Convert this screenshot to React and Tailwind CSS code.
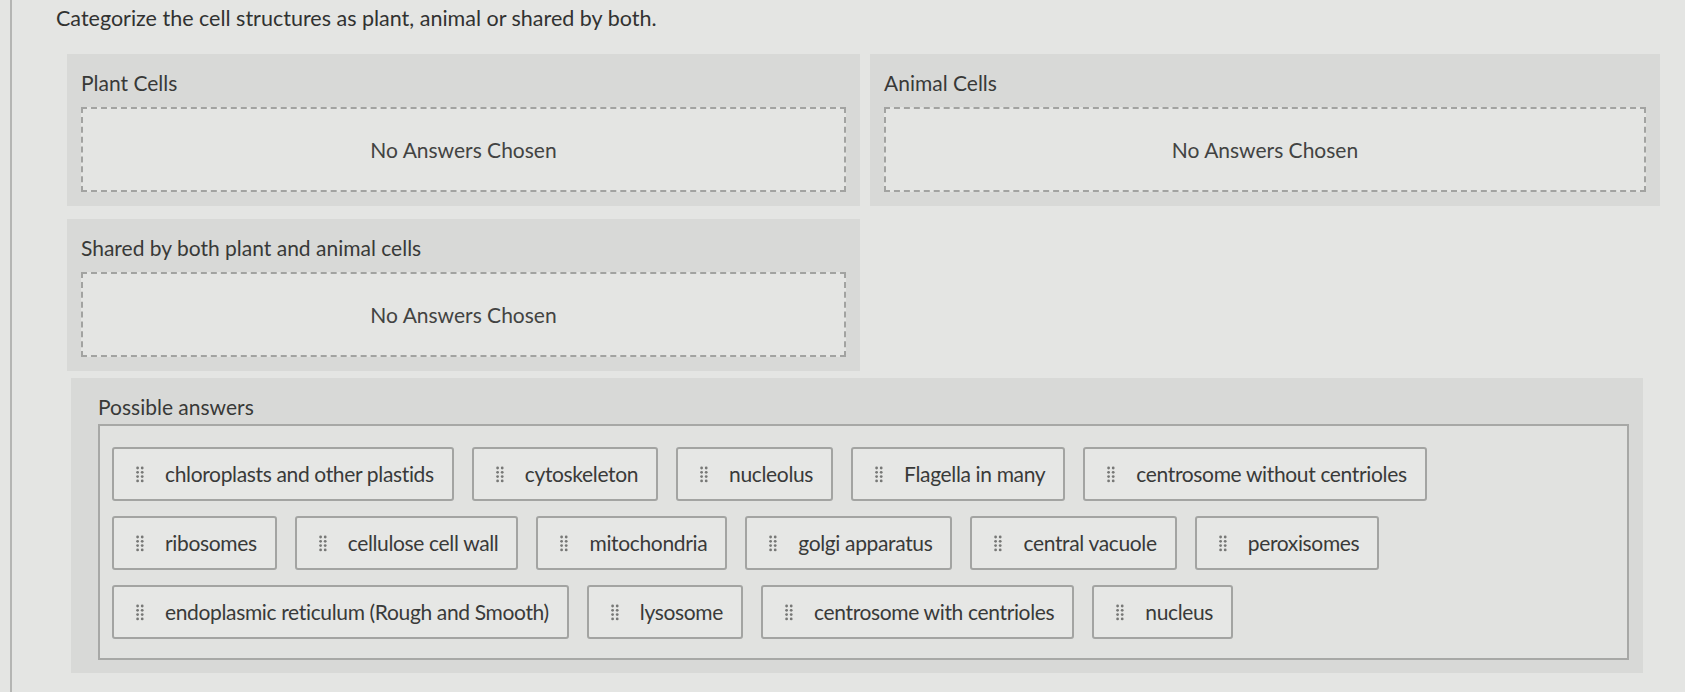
import React from 'react';

const rows = [
  ['chloroplasts and other plastids', 'cytoskeleton', 'nucleolus', 'Flagella in many', 'centrosome without centrioles'],
  ['ribosomes', 'cellulose cell wall', 'mitochondria', 'golgi apparatus', 'central vacuole', 'peroxisomes'],
  ['endoplasmic reticulum (Rough and Smooth)', 'lysosome', 'centrosome with centrioles', 'nucleus'],
];

// drag handle: two columns of four dots
function Grip() {
  return (
    <svg width="8" height="17" viewBox="0 0 8 17" className="shrink-0">
      {[2, 6.3, 10.6, 14.9].map((y) =>
        [1.6, 6.2].map((x) => <circle key={`${x}-${y}`} cx={x} cy={y} r="1.4" fill="#777876" />)
      )}
    </svg>
  );
}

function Chip({ label }) {
  return (
    <div className="flex h-[54px] items-center rounded-[3px] border-2 border-[#a3a4a2] bg-[#e6e7e5] pl-[22px] pr-[18px]">
      <Grip />
      <span className="ml-[21px] whitespace-nowrap text-[21px] tracking-[-0.35px] text-[#393a39]">{label}</span>
    </div>
  );
}

function DropZone({ title }) {
  return (
    <div className="bg-[#d8d9d7] px-[14px] pt-[16px] pb-[14px]">
      <h2 className="text-[21px] leading-[26px] text-[#383938]">{title}</h2>
      <div className="mt-[11px] flex h-[85px] items-center justify-center border-2 border-dashed border-[#a2a3a1] bg-[#e4e5e3]">
        <span className="text-[21px] text-[#424342]">No Answers Chosen</span>
      </div>
    </div>
  );
}

export default function App() {
  return (
    <div className="min-h-screen bg-[#e4e5e3] pl-[10px]" style={{ fontFamily: 'Lato, "Open Sans", sans-serif' }}>
      <div className="min-h-[692px] border-l-2 border-[#b4b5b3] pl-[44px] pt-[5px]">
        <h1 className="text-[21.5px] leading-[26px] text-[#313231]">
          Categorize the cell structures as plant, animal or shared by both.
        </h1>

        <div className="mt-[23px] ml-[11px] grid grid-cols-[793px_790px] gap-x-[10px] gap-y-[13px]">
          <DropZone title="Plant Cells" />
          <DropZone title="Animal Cells" />
          <DropZone title="Shared by both plant and animal cells" />
        </div>

        <div className="mt-[7px] ml-[15px] w-[1572px] bg-[#d8d9d7] pl-[27px] pr-[14px] pt-[16px] pb-[13px]">
          <h2 className="text-[21px] leading-[26px] text-[#383938]">Possible answers</h2>
          <div className="mt-[4px] flex flex-col gap-[15px] border-2 border-[#a7a8a6] bg-[#e1e2e0] px-[12px] pt-[21px] pb-[19px]">
            {rows.map((row, i) => (
              <div key={i} className="flex gap-[18px]">
                {row.map((item) => (
                  <Chip key={item} label={item} />
                ))}
              </div>
            ))}
          </div>
        </div>
      </div>
    </div>
  );
}
